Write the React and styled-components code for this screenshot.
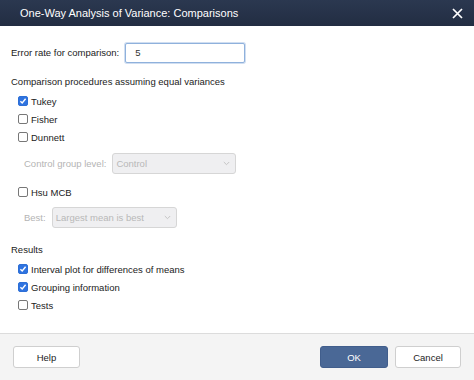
import React, { useState } from "react";
import styled, { createGlobalStyle } from "styled-components";

const GlobalStyle = createGlobalStyle`
  html, body {
    margin: 0;
    padding: 0;
    background: #ffffff;
  }
  body {
    font-family: "Liberation Sans", Arial, sans-serif;
    font-size: 9.5px;
    color: #222;
  }
`;

const Dialog = styled.div`
  width: 474px;
  height: 380px;
  display: flex;
  flex-direction: column;
  background: #fff;
  overflow: hidden;
`;

const TitleBar = styled.div`
  height: 26px;
  flex: none;
  display: flex;
  align-items: center;
  justify-content: space-between;
  padding: 0 11px 0 20px;
  background: linear-gradient(#2b3850, #222d42);
  color: #fff;
  font-size: 11px;
`;

const CloseButton = styled.button`
  border: none;
  background: none;
  padding: 0;
  width: 11px;
  height: 11px;
  display: flex;
  align-items: center;
  justify-content: center;
  cursor: pointer;
`;

const Body = styled.div`
  flex: 1;
  padding: 16px 11px 0;
  display: flex;
  flex-direction: column;
`;

const FieldRow = styled.div`
  display: flex;
  align-items: center;
  gap: ${(p) => p.$gap || 6}px;
  padding-left: ${(p) => p.$indent || 0}px;
  height: 21px;
  margin-top: ${(p) => p.$top || 0}px;
`;

const Label = styled.span`
  color: ${(p) => (p.$disabled ? "#b4b4b4" : "#222")};
  white-space: nowrap;
`;

const TextInput = styled.input`
  box-sizing: border-box;
  width: 120px;
  height: 20px;
  border: 1px solid #8fb1dc;
  border-radius: 2px;
  box-shadow: 0 0 0 1px rgba(120, 160, 215, 0.35);
  padding: 0 9px;
  font: inherit;
  color: #333;
  outline: none;
`;

const SectionTitle = styled.div`
  margin-top: ${(p) => p.$top}px;
  margin-bottom: 3px;
  line-height: 14px;
`;

const CheckRow = styled.label`
  display: flex;
  align-items: center;
  gap: 3px;
  padding-left: 7px;
  height: 18px;
  margin-top: ${(p) => p.$top || 0}px;
  cursor: pointer;
`;

const Box = styled.span`
  box-sizing: border-box;
  width: 10px;
  height: 10px;
  border-radius: 2px;
  display: flex;
  align-items: center;
  justify-content: center;
  border: 1px solid ${(p) => (p.$checked ? "#2d6fd6" : "#777")};
  background: ${(p) => (p.$checked ? "#2f73e0" : "#fff")};
`;

const Select = styled.div`
  box-sizing: border-box;
  width: ${(p) => p.$width}px;
  height: 21px;
  border: 1px solid #d6d6d6;
  border-radius: 3px;
  background: #efeff1;
  color: #b8b8b8;
  display: flex;
  align-items: center;
  justify-content: space-between;
  padding: 0 5px 0 3px;
`;

const Footer = styled.div`
  height: 46px;
  flex: none;
  border-top: 1px solid #dcdcdc;
  background: #f4f4f4;
  display: flex;
  align-items: center;
  padding: 0 13px;
  gap: 7px;
`;

const Spacer = styled.div`
  flex: 1;
`;

const Button = styled.button`
  box-sizing: border-box;
  width: ${(p) => p.$width || 67}px;
  height: 22px;
  border-radius: 3px;
  font-family: inherit;
  font-size: 9.5px;
  border: 1px solid ${(p) => (p.$primary ? "#415e8c" : "#cfcfcf")};
  background: ${(p) => (p.$primary ? "#4a6896" : "#fff")};
  color: ${(p) => (p.$primary ? "#fff" : "#222")};
  cursor: pointer;
`;

const Check = ({ label, checked, onToggle, top }) => (
  <CheckRow $top={top} onClick={onToggle}>
    <Box $checked={checked}>
      {checked && (
        <svg width="8" height="8" viewBox="0 0 8 8">
          <path d="M1.4 4.2 L3.2 6 L6.6 1.8" fill="none" stroke="#fff" strokeWidth="1.4" />
        </svg>
      )}
    </Box>
    <span>{label}</span>
  </CheckRow>
);

const Chevron = () => (
  <svg width="7" height="5" viewBox="0 0 7 5">
    <path d="M0.8 1 L3.5 3.7 L6.2 1" fill="none" stroke="#c4c4c4" strokeWidth="1" />
  </svg>
);

export default function App() {
  const [opts, setOpts] = useState({
    tukey: true,
    fisher: false,
    dunnett: false,
    hsu: false,
    interval: true,
    grouping: true,
    tests: false,
  });
  const toggle = (k) => () => setOpts({ ...opts, [k]: !opts[k] });

  return (
    <>
      <GlobalStyle />
      <Dialog>
        <TitleBar>
          <span>One-Way Analysis of Variance: Comparisons</span>
          <CloseButton aria-label="Close">
            <svg width="11" height="11" viewBox="0 0 11 11">
              <path d="M1 1 L10 10 M10 1 L1 10" stroke="#fff" strokeWidth="1.7" />
            </svg>
          </CloseButton>
        </TitleBar>
        <Body>
          <FieldRow>
            <Label>Error rate for comparison:</Label>
            <TextInput defaultValue="5" />
          </FieldRow>

          <SectionTitle $top={12}>Comparison procedures assuming equal variances</SectionTitle>
          <Check label="Tukey" checked={opts.tukey} onToggle={toggle("tukey")} />
          <Check label="Fisher" checked={opts.fisher} onToggle={toggle("fisher")} />
          <Check label="Dunnett" checked={opts.dunnett} onToggle={toggle("dunnett")} />
          <FieldRow $indent={13} $top={7}>
            <Label $disabled>Control group level:</Label>
            <Select $width={124}>
              <span>Control</span>
              <Chevron />
            </Select>
          </FieldRow>
          <Check label="Hsu MCB" checked={opts.hsu} onToggle={toggle("hsu")} top={9} />
          <FieldRow $indent={13} $top={6}>
            <Label $disabled>Best:</Label>
            <Select $width={125}>
              <span>Largest mean is best</span>
              <Chevron />
            </Select>
          </FieldRow>

          <SectionTitle $top={15}>Results</SectionTitle>
          <Check label="Interval plot for differences of means" checked={opts.interval} onToggle={toggle("interval")} />
          <Check label="Grouping information" checked={opts.grouping} onToggle={toggle("grouping")} />
          <Check label="Tests" checked={opts.tests} onToggle={toggle("tests")} />
        </Body>
        <Footer>
          <Button>Help</Button>
          <Spacer />
          <Button $primary $width={68}>OK</Button>
          <Button $width={66}>Cancel</Button>
        </Footer>
      </Dialog>
    </>
  );
}
